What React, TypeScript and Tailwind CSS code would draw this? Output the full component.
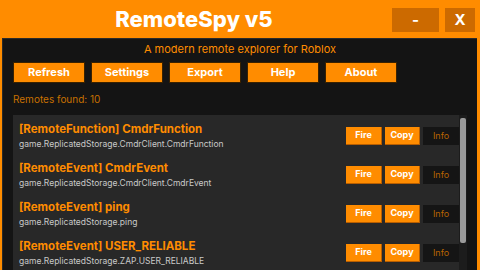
import React from "react";

const remotes = [
  { type: "RemoteFunction", name: "CmdrFunction", path: "game.ReplicatedStorage.CmdrClient.CmdrFunction" },
  { type: "RemoteEvent", name: "CmdrEvent", path: "game.ReplicatedStorage.CmdrClient.CmdrEvent" },
  { type: "RemoteEvent", name: "ping", path: "game.ReplicatedStorage.ping" },
  { type: "RemoteEvent", name: "USER_RELIABLE", path: "game.ReplicatedStorage.ZAP.USER_RELIABLE" },
];

export default function App() {
  const font = { fontFamily: "Inter, 'Open Sans', sans-serif" };
  return (
    <div className="w-[480px] h-[270px] overflow-hidden bg-[#ff8c00] flex flex-col" style={font}>
      <div className="h-[38px] flex items-center shrink-0">
        <div className="flex-1 text-center text-white font-extrabold text-[22px] leading-none pr-[4px]">RemoteSpy v5</div>
        <div className="flex items-center gap-[6px] pr-[5px] pt-[2px]">
          <div className="w-[47px] h-[24px] bg-[#cc6a00] text-white font-bold text-[15px] flex items-center justify-center">-</div>
          <div className="w-[30px] h-[24px] bg-[#cc6a00] text-white font-bold text-[15px] flex items-center justify-center">X</div>
        </div>
      </div>
      <div className="flex-1 ml-[2px] mr-[3px] bg-[#141414] border-l border-t border-[#2a2a2a] flex flex-col pl-[10px] pr-[10px] min-h-0">
        <div className="h-[20px] flex items-center justify-center text-[#ff8c00] text-[11px] leading-none">A modern remote explorer for Roblox</div>
        <div className="flex gap-[6px] mt-[3px]">
          {["Refresh", "Settings", "Export", "Help", "About"].map((b) => (
            <div key={b} className="w-[72px] h-[21px] bg-[#ff8c00] border border-[#3a2200] text-white font-bold text-[11px] flex items-center justify-center">{b}</div>
          ))}
        </div>
        <div className="h-[32px] flex items-center text-[#c87000] text-[10px]">Remotes found: 10</div>
        <div className="flex-1 flex min-h-0">
          <div className="flex-1 bg-[#282828] flex flex-col pt-[1px] min-h-0 overflow-hidden">
            {remotes.map((r) => (
              <div key={r.name} className="h-[39px] shrink-0 flex items-center pl-[6px]">
                <div className="flex-1 flex flex-col gap-[3px]">
                  <div className="text-[#ff8c00] font-bold text-[11.5px] leading-[14px]">[{r.type}] {r.name}</div>
                  <div className="text-[#c8c8c8] text-[8.5px] leading-[11px]">{r.path}</div>
                </div>
                <div className="flex gap-[3px]">
                  <div className="w-[36px] h-[18px] bg-[#ff8c00] border-b border-r border-[#b85e00] text-white font-bold text-[9px] flex items-center justify-center">Fire</div>
                  <div className="w-[35px] h-[18px] bg-[#ff8c00] border-b border-r border-[#b85e00] text-white font-bold text-[9px] flex items-center justify-center">Copy</div>
                  <div className="w-[36px] h-[18px] bg-[#151515] text-[#b86400] text-[9px] flex items-center justify-center">Info</div>
                </div>
              </div>
            ))}
          </div>
          <div className="w-[8px] bg-[#1c1c1c] pt-[3px] pl-[1px]">
            <div className="w-[6px] h-[125px] bg-[#9a9a9a] rounded-[2px]"></div>
          </div>
        </div>
      </div>
    </div>
  );
}
